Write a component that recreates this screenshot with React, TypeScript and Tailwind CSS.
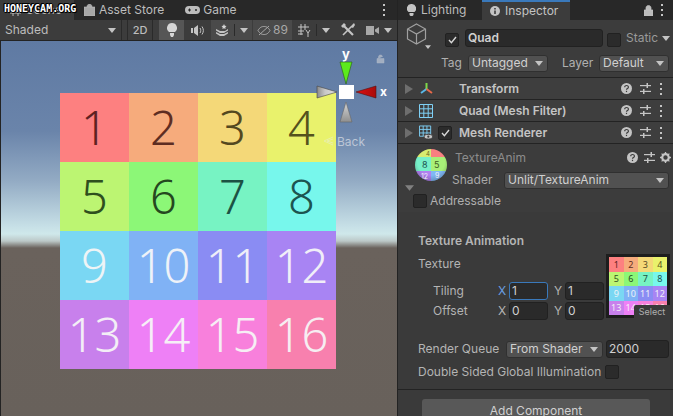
const cells = [
  { n: "1", bg: "bg-[#fd8080]", fg: "text-[#5e2222]" },
  { n: "2", bg: "bg-[#f6ab7c]", fg: "text-[#5e2d22]" },
  { n: "3", bg: "bg-[#f4d878]", fg: "text-[#54481f]" },
  { n: "4", bg: "bg-[#e9f26c]", fg: "text-[#54521d]" },
  { n: "5", bg: "bg-[#bcf572]", fg: "text-[#2f4f1e]" },
  { n: "6", bg: "bg-[#8cf777]", fg: "text-[#25481f]" },
  { n: "7", bg: "bg-[#77f3c3]", fg: "text-[#1c5244]" },
  { n: "8", bg: "bg-[#77f7ec]", fg: "text-[#1c5450]" },
  { n: "9", bg: "bg-[#7ad7f3]", fg: "text-[#eef4f6]" },
  { n: "10", bg: "bg-[#80b2f5]", fg: "text-[#eef2f8]" },
  { n: "11", bg: "bg-[#8a8cf3]", fg: "text-[#eeeef8]" },
  { n: "12", bg: "bg-[#a884f3]", fg: "text-[#f0eef8]" },
  { n: "13", bg: "bg-[#c880ec]", fg: "text-[#f3eef6]" },
  { n: "14", bg: "bg-[#ee80f6]", fg: "text-[#f6eef6]" },
  { n: "15", bg: "bg-[#f880dc]", fg: "text-[#f6eef4]" },
  { n: "16", bg: "bg-[#f880ae]", fg: "text-[#f6eef2]" },
];

const Caret = ({ className = "" }: { className?: string }) => (
  <svg width="8" height="5" viewBox="0 0 8 5" className={className}>
    <path d="M0 0h8L4 5z" fill="#c4c4c4" />
  </svg>
);

const Kebab = () => (
  <svg width="4" height="12" viewBox="0 0 4 12">
    <g fill="#c4c4c4">
      <rect x="1" y="0" width="2" height="2" />
      <rect x="1" y="5" width="2" height="2" />
      <rect x="1" y="10" width="2" height="2" />
    </g>
  </svg>
);

const Help = () => (
  <svg width="11" height="11" viewBox="0 0 11 11">
    <circle cx="5.5" cy="5.5" r="5.5" fill="#c4c4c4" />
    <path d="M3.7 4.2c0-2.3 3.7-2.3 3.7 0 0 1.4-1.9 1.3-1.9 2.6" fill="none" stroke="#3c3c3c" strokeWidth="1.2" />
    <rect x="4.9" y="7.8" width="1.2" height="1.3" fill="#3c3c3c" />
  </svg>
);

const Sliders = () => (
  <svg width="11" height="11" viewBox="0 0 11 11">
    <g fill="#c4c4c4">
      <rect x="0" y="2" width="11" height="1.2" />
      <rect x="0" y="7.8" width="11" height="1.2" />
      <rect x="6.5" y="0" width="1.5" height="5" />
      <rect x="3" y="6" width="1.5" height="5" />
    </g>
  </svg>
);

const Check = () => (
  <svg width="9" height="8" viewBox="0 0 9 8">
    <path d="M1 4l2.4 2.6L8 1" fill="none" stroke="#d8d8d8" strokeWidth="1.4" />
  </svg>
);

const Box = ({ checked = false }: { checked?: boolean }) => (
  <span className="flex h-[14px] w-[14px] shrink-0 items-center justify-center rounded-[2px] border border-[#212121] bg-[#2b2b2b]">
    {checked && <Check />}
  </span>
);

const GridIcon = () => (
  <svg width="14" height="14" viewBox="0 0 14 14">
    <path d="M.5.5h13v13H.5zM.5 4.800h13M.5 9.200h13M4.800.5v13M9.200.5v13" fill="none" stroke="#7fd0f5" strokeWidth="1" />
  </svg>
);

const ToolBtn = ({ w, active, children }: { w: string; active?: string; children: React.ReactNode }) => (
  <div className={`flex h-[20px] items-center justify-center gap-[5px] ${w} ${active ?? "bg-[#3c3c3c]"} text-[#bdbdbd]`}>
    {children}
  </div>
);

const Toolbar = () => (
  <div className="flex h-[21px] items-center border-b border-[#232323] bg-[#3c3c3c] text-[12px]">
    <div className="flex h-[20px] w-[122px] items-center justify-between border-r border-[#2a2a2a] pl-[5px] pr-[5px] text-[#bdbdbd]">
      Shaded
      <Caret />
    </div>
    <div className="ml-[5px] flex h-[20px] w-[26px] items-center justify-center border-x border-[#2a2a2a] text-[11px] font-medium text-[#bdbdbd]">
      2D
    </div>
    <div className="ml-[6px] flex items-center gap-px">
      <ToolBtn w="w-[25px]" active="bg-[#565656]">
        <svg width="10" height="14" viewBox="0 0 10 14">
          <path d="M5 0a5 5 0 0 1 3 9H2A5 5 0 0 1 5 0zM3 10h4v2l-1 2H4l-1-2z" fill="#d6d6d6" />
        </svg>
      </ToolBtn>
      <ToolBtn w="w-[25px]">
        <svg width="13" height="11" viewBox="0 0 13 11">
          <path d="M0 3h2v5H0zM3 3l4-3v11L3 8z" fill="#c4c4c4" />
          <path d="M9 3c1 1.500 1 3.500 0 5M11 1.500c1.800 2.500 1.800 5.500 0 8" fill="none" stroke="#c4c4c4" />
        </svg>
      </ToolBtn>
      <ToolBtn w="w-[41px]" active="bg-[#4a4a4a]">
        <svg width="13" height="12" viewBox="0 0 13 12">
          <path d="M0 5l4 2 5 0 3-2v1.500L8 9H4L0 6.500zM0 8l4 2h4l4-2v1.500L8 12H4L0 9.500z" fill="#c4c4c4" />
          <path d="M8 0l.8 1.700 1.700.3-1.200 1.200.3 1.800L8 4.200l-1.600.8.300-1.800L5.500 2l1.700-.3z" fill="#d6d6d6" />
        </svg>
        <span className="h-[12px] w-px bg-[#2a2a2a]" />
        <Caret />
      </ToolBtn>
      <ToolBtn w="w-[39px]" active="bg-[#4a4a4a]">
        <svg width="14" height="11" viewBox="0 0 14 11" className="-mr-[3px]">
          <path d="M1 5.500C3 2 5 1.500 7 1.500s4 .5 6 4c-2 3.500-4 4-6 4s-4-.5-6-4zM2 10l10-9" fill="none" stroke="#a8a8a8" />
        </svg>
        <span className="text-[12px] leading-none text-[#a8a8a8]">89</span>
      </ToolBtn>
      <ToolBtn w="w-[41px]">
        <svg width="13" height="13" viewBox="0 0 13 13">
          <path d="M3 0v11M7 0v6M0 3h11M0 7h6M0 10h5M8 6l2 3 2-3M10 9v4" fill="none" stroke="#c4c4c4" />
        </svg>
        <span className="h-[12px] w-px bg-[#2a2a2a]" />
        <Caret />
      </ToolBtn>
      <ToolBtn w="w-[25px]">
        <svg width="14" height="14" viewBox="0 0 14 14">
          <path d="M3 3l9 9" stroke="#c4c4c4" strokeWidth="2.200" />
          <path d="M0 3l3-3 2 2-3 3zM11 2l2-2 1 2-2 3-2-1z" fill="#c4c4c4" />
          <path d="M11 3l-9 9" stroke="#c4c4c4" strokeWidth="1.600" />
        </svg>
      </ToolBtn>
      <ToolBtn w="w-[35px]">
        <svg width="13" height="9" viewBox="0 0 13 9">
          <path d="M0 0h8v9H0zM9 3.500L13 1v7L9 5.500z" fill="#a8a8a8" />
        </svg>
        <Caret />
      </ToolBtn>
    </div>
  </div>
);

const SceneTabs = () => (
  <div className="relative flex h-[20px] items-center bg-[#282828] text-[12px] text-[#bdbdbd]">
    <div className="flex h-full w-[74px] items-center gap-[5px] bg-[#3c3c3c] pl-[10px]">
      <svg width="11" height="11" viewBox="0 0 11 11">
        <path d="M3 0v11M8 0v11M0 3h11M0 8h11" stroke="#bdbdbd" fill="none" />
      </svg>
      Scene
    </div>
    <svg width="11" height="12" viewBox="0 0 11 12" className="ml-[10px]">
      <path d="M0 3h11v9H0zM3 3c0-4 5-4 5 0" fill="#bdbdbd" stroke="#bdbdbd" strokeWidth=".6" fillOpacity=".85" />
    </svg>
    <span className="ml-[4px]">Asset Store</span>
    <svg width="15" height="8" viewBox="0 0 15 8" className="ml-[21px]">
      <rect width="15" height="8" rx="4" fill="#bdbdbd" />
      <path d="M3 4h3M4.500 2.500v3" stroke="#282828" />
      <circle cx="11" cy="4" r="1" fill="#282828" />
    </svg>
    <span className="ml-[3px]">Game</span>
    <span className="ml-auto mr-[11px]">
      <Kebab />
    </span>
    <span className="absolute left-[4px] top-[3px] font-['DejaVu_Sans_Mono',monospace] text-[10px] font-bold leading-[12px] text-white [text-shadow:-1px_0_#000,1px_0_#000,0_-1px_#000,0_1px_#000,1px_1px_#000,-1px_-1px_#000]">
      HONEYCAM.ORG
    </span>
  </div>
);

const Gizmo = () => (
  <svg width="85" height="120" viewBox="0 -10 85 120" className="absolute left-[309px] top-[-1px]">
    <defs>
      <linearGradient id="coneH" x1="0" x2="1" y1="0" y2="0">
        <stop offset="0" stopColor="#8a8a8a" />
        <stop offset=".4" stopColor="#c8c8c8" />
        <stop offset="1" stopColor="#e0e0e0" />
      </linearGradient>
      <linearGradient id="coneV" x1="0" x2="0" y1="0" y2="1">
        <stop offset="0" stopColor="#d8d8d8" />
        <stop offset="1" stopColor="#8f8f8f" />
      </linearGradient>
      <linearGradient id="coneR" x1="0" x2="1" y1="0" y2="0">
        <stop offset="0" stopColor="#e01010" />
        <stop offset="1" stopColor="#a80c0c" />
      </linearGradient>
    </defs>
    <rect x="29" y="35" width="15" height="14" fill="#fff" />
    <path d="M36 34l-6-22h12z" fill="#5ce91c" stroke="#2a5a14" strokeWidth=".6" />
    <path d="M46 42l20-6v12z" fill="url(#coneR)" stroke="#501010" strokeWidth=".6" />
    <path d="M27 42L7 36v12z" fill="url(#coneH)" stroke="#444" strokeWidth=".6" />
    <path d="M36 52l-6 20h12z" fill="url(#coneV)" stroke="#666" strokeWidth=".6" />
    <path d="M67 8.500h7V13h-7zM68.500 8.500V6.800c0-2.400 4-2.400 4 0" fill="#aab4c4" stroke="#aab4c4" strokeWidth=".5" fillOpacity=".9" />
    <text x="36" y="9" textAnchor="middle" fontSize="13" fontWeight="700" fill="#fff" fontFamily="Inter, sans-serif">y</text>
    <text x="70" y="46" fontSize="12" fontWeight="700" fill="#fff" fontFamily="Inter, sans-serif">x</text>
    <path d="M23 87l-9 4 9 4M23 89l-6 2 6 2" fill="none" stroke="#e8eeb0" strokeOpacity=".85" />
    <text x="27" y="96" fontSize="12" fill="#d5dae2" fillOpacity=".75" fontFamily="Inter, sans-serif">Back</text>
  </svg>
);

const SceneView = () => (
  <div className="relative flex-1 overflow-hidden border-l border-[#232323] bg-[linear-gradient(180deg,#5f7aa3_0px,#6a84aa_90px,#93abc4_140px,#c6dfe6_185px,#cfe8ea_193px,#bcc8c8_200px,#6a625c_207px,#68615b_100%)] pl-[59px] pt-[52px]">
    <div className="grid h-[276px] w-[276px] grid-cols-4 grid-rows-4 font-['Noto_Sans',sans-serif]">
      {cells.map((c) => (
        <div key={c.n} className={`flex items-center justify-center text-[47px] font-light leading-none ${c.bg} ${c.fg}`}>
          {c.n}
        </div>
      ))}
    </div>
    <Gizmo />
  </div>
);

const Select = ({ w, label }: { w: string; label: string }) => (
  <div className={`flex h-[17px] items-center justify-between rounded-[3px] border border-[#303030] bg-[#515151] pl-[3px] pr-[4px] text-[12px] text-[#d0d0d0] ${w}`}>
    <span>{label}</span>
    <Caret />
  </div>
);

const Field = ({ w, value, focus }: { w: string; value: string; focus?: boolean }) => (
  <div className={`flex h-[18px] items-center rounded-[3px] border bg-[#2a2a2a] pl-[2px] text-[12px] text-[#d0d0d0] ${w} ${focus ? "border-[#3a79bb]" : "border-[#212121]"}`}>
    {value}
  </div>
);

const ComponentRow = ({ icon, check, label }: { icon: React.ReactNode; check?: boolean; label: string }) => (
  <div className="flex h-[22px] items-center border-b border-[#232323] bg-[#3e3e3e] pl-[7px]">
    <svg width="8" height="10" viewBox="0 0 8 10">
      <path d="M0 0l8 5-8 5z" fill="#6e6e6e" />
    </svg>
    <span className="ml-[6px] flex w-[14px] justify-center">{icon}</span>
    <span className="ml-[5px] flex w-[16px]">{check && <Box checked />}</span>
    <span className="ml-[5px] text-[12px] font-semibold text-[#c4c4c4]">{label}</span>
    <span className="ml-auto flex w-[52px] items-center justify-between pr-[10px]">
      <Help />
      <Sliders />
      <Kebab />
    </span>
  </div>
);

const InspectorHeader = () => (
  <>
    <div className="flex h-[20px] items-center bg-[#282828] text-[12px] text-[#bdbdbd]">
      <svg width="9" height="12" viewBox="0 0 9 12" className="ml-[9px]">
        <path d="M4.500 0a4.500 4.500 0 0 1 3 8h-6a4.500 4.500 0 0 1 3-8zM2.500 9h4v2l-1 1h-2l-1-1z" fill="#c4c4c4" />
      </svg>
      <span className="ml-[5px] w-[61px]">Lighting</span>
      <div className="flex h-full w-[88px] items-center gap-[5px] border-t-2 border-[#3a79bb] bg-[#3c3c3c] pl-[8px] text-[#c4c4c4]">
        <svg width="10" height="10" viewBox="0 0 10 10">
          <circle cx="5" cy="5" r="5" fill="#c4c4c4" />
          <path d="M4.200 2h1.600v1.500H4.200zM4.200 4.500h1.600V8H4.200z" fill="#3c3c3c" />
        </svg>
        Inspector
      </div>
      <svg width="9" height="11" viewBox="0 0 9 11" className="ml-auto">
        <path d="M0 5h9v6H0zM2 5V3c0-3.500 5-3.500 5 0v2" fill="#c4c4c4" stroke="#c4c4c4" strokeWidth=".7" fillOpacity=".95" />
      </svg>
      <span className="ml-[7px] mr-[9px]">
        <Kebab />
      </span>
    </div>
    <div className="h-[58px] border-b border-[#232323] bg-[#3c3c3c]">
      <div className="flex h-[27px] items-end">
        <div className="relative ml-[8px] h-[24px] w-[39px]">
          <svg width="21" height="22" viewBox="0 0 21 22">
            <path d="M10.500 1l9 5v10l-9 5-9-5V6zM1.500 6l9 5 9-5M10.500 11v10" fill="none" stroke="#a0a0a0" strokeWidth="1.200" />
          </svg>
          <Caret className="absolute bottom-[-2px] left-[19px] h-[4px] w-[6px]" />
        </div>
        <Box checked />
        <div className="ml-[6px] flex h-[18px] w-[138px] items-center rounded-[3px] border border-[#212121] bg-[#2a2a2a] pl-[2px] text-[12px] font-semibold text-[#d0d0d0]">
          Quad
        </div>
        <span className="ml-[4px] flex">
          <Box />
        </span>
        <span className="ml-[5px] text-[12px] leading-[18px] text-[#9a9a9a]">Static</span>
        <Caret className="mb-[6px] ml-[4px]" />
      </div>
      <div className="mt-[7px] flex items-center text-[12px] text-[#b0b0b0]">
        <span className="ml-[43px] w-[27px]">Tag</span>
        <Select w="w-[80px]" label="Untagged" />
        <span className="ml-[14px] w-[37px]">Layer</span>
        <Select w="w-[70px]" label="Default" />
      </div>
    </div>
  </>
);

const Sphere = () => (
  <svg width="32" height="32" viewBox="0 0 32 32">
    <defs>
      <clipPath id="sphere">
        <circle cx="16" cy="16" r="16" />
      </clipPath>
      <radialGradient id="shade" cx=".5" cy=".4" r=".6">
        <stop offset=".7" stopColor="#000" stopOpacity="0" />
        <stop offset="1" stopColor="#000" stopOpacity=".2" />
      </radialGradient>
    </defs>
    <g clipPath="url(#sphere)">
      <rect width="16" height="8" fill="#d8ec70" />
      <rect x="16" width="16" height="8" fill="#f88080" />
      <rect y="8" width="16" height="14" fill="#77f0c8" />
      <rect x="16" y="8" width="16" height="14" fill="#a8f078" />
      <rect y="22" width="16" height="10" fill="#b080f0" />
      <rect x="16" y="22" width="16" height="10" fill="#80b8f5" />
      <rect width="32" height="32" fill="url(#shade)" />
      <text x="7" y="19" fontSize="9" fill="#1c5450" fontFamily="Inter, sans-serif">8</text>
      <text x="19" y="19" fontSize="9" fill="#3f5a1e" fontFamily="Inter, sans-serif">5</text>
      <text x="6" y="30" fontSize="7" fill="#f0f0f8" fontFamily="Inter, sans-serif">12</text>
      <text x="20" y="29" fontSize="7" fill="#f0f0f8" fontFamily="Inter, sans-serif">9</text>
      <text x="11" y="7" fontSize="6" fill="#6b6b20" fontFamily="Inter, sans-serif">4</text>
    </g>
  </svg>
);

const Material = () => (
  <div className="relative h-[68px] bg-[#3c3c3c] pl-[17px] pt-[5px]">
    <div className="flex">
      <Sphere />
      <div className="ml-[5px] flex-1">
        <div className="flex h-[17px] items-center">
          <span className="ml-[3px] text-[12px] text-[#8c8c8c]">TextureAnim</span>
          <span className="ml-auto mr-[2px] flex w-[44px] items-center justify-between">
            <Help />
            <Sliders />
            <svg width="11" height="11" viewBox="0 0 11 11">
              <circle cx="5.500" cy="5.500" r="3.300" fill="none" stroke="#c4c4c4" strokeWidth="2.200" />
              <path d="M5.500 0v2.500M5.500 8.500V11M0 5.500h2.500M8.500 5.500H11M1.600 1.600l1.800 1.800M7.600 7.600l1.800 1.800M9.400 1.600L7.600 3.400M3.400 7.600L1.600 9.400" stroke="#c4c4c4" strokeWidth="1.300" />
            </svg>
          </span>
        </div>
        <div className="mt-[5px] flex items-center pr-[4px]">
          <span className="w-[52px] text-[12px] text-[#a8a8a8]">Shader</span>
          <Select w="w-[165px]" label="Unlit/TextureAnim" />
        </div>
      </div>
    </div>
    <Caret className="absolute left-[7px] top-[41px] h-[6px] w-[9px] opacity-50" />
    <div className="absolute left-[15px] top-[48px] flex items-center gap-[3px] text-[12px] text-[#b0b0b0]">
      <Box />
      Addressable
    </div>
  </div>
);

const TexturePreview = () => (
  <div className="relative ml-auto mr-[3px] h-[64px] w-[64px] overflow-hidden bg-[#1d1d1d] p-[3px]">
    <div className="grid h-[58px] w-[58px] grid-cols-4 grid-rows-4 font-['Noto_Sans',sans-serif]">
      {cells.map((c) => (
        <div key={c.n} className={`flex items-center justify-center text-[9px] leading-none ${c.bg} ${c.fg}`}>
          {c.n}
        </div>
      ))}
    </div>
    <div className="absolute bottom-0 right-0 flex h-[13px] w-[36px] items-center justify-center rounded-tl-[2px] bg-[#3a3a3a] text-[9px] text-[#b0b0b0]">
      Select
    </div>
  </div>
);

const TextureAnimation = () => (
  <div className="flex-1 overflow-hidden bg-[#3a3a3a] pt-[20px] text-[12px] text-[#b4b4b4]">
    <div className="flex h-[18px] items-center pl-[20px] text-[12px] font-semibold">Texture Animation</div>
    <div className="mt-[4px] flex">
      <div className="w-[208px] pl-[20px]">
        <div className="flex h-[20px] items-center">Texture</div>
        <div className="mt-[8px] flex h-[18px] items-center">
          <span className="ml-[15px] w-[65px]">Tiling</span>
          <span className="w-[11px] text-[#6a9ee0]">X</span>
          <Field w="w-[39px]" value="1" focus />
          <span className="ml-[6px] w-[11px]">Y</span>
          <Field w="w-[39px]" value="1" />
        </div>
        <div className="mt-[2px] flex h-[18px] items-center">
          <span className="ml-[15px] w-[65px]">Offset</span>
          <span className="w-[11px]">X</span>
          <Field w="w-[39px]" value="0" />
          <span className="ml-[6px] w-[11px]">Y</span>
          <Field w="w-[39px]" value="0" />
        </div>
      </div>
      <TexturePreview />
    </div>
    <div className="mt-[20px] flex h-[18px] items-center pl-[20px]">
      <span className="w-[88px]">Render Queue</span>
      <Select w="w-[97px]" label="From Shader" />
      <span className="ml-[3px]">
        <Field w="w-[63px]" value="2000" />
      </span>
    </div>
    <div className="mt-[5px] flex h-[18px] items-center pl-[20px]">
      <span className="w-[187px]">Double Sided Global Illumination</span>
      <Box />
    </div>
    <div className="mt-[8px] border-t border-[#232323] pt-[9px]">
      <div className="ml-[24px] flex h-[24px] w-[228px] items-start justify-center rounded-[3px] bg-[#585858] pt-[3px] text-[#d0d0d0]">
        Add Component
      </div>
    </div>
  </div>
);

export default function App() {
  return (
    <div className="flex h-[416px] w-[673px] overflow-hidden bg-[#232323] font-['Inter',sans-serif]">
      <div className="flex w-[397px] flex-col">
        <SceneTabs />
        <Toolbar />
        <SceneView />
      </div>
      <div className="ml-px flex w-[275px] flex-col">
        <InspectorHeader />
        <ComponentRow
          label="Transform"
          icon={
            <svg width="13" height="12" viewBox="0 0 13 12">
              <path d="M6.500 6V0" stroke="#7fd84a" strokeWidth="2" />
              <path d="M6.500 6L1 10" stroke="#5ab8e8" strokeWidth="2" />
              <path d="M6.500 6l5.500 4" stroke="#e8694a" strokeWidth="2" />
            </svg>
          }
        />
        <ComponentRow label="Quad (Mesh Filter)" icon={<GridIcon />} />
        <ComponentRow
          label="Mesh Renderer"
          check
          icon={
            <svg width="15" height="15" viewBox="0 0 15 15">
              <path d="M.5.500h12v11H.5zM.5 4.200h12M.5 8h12M4.500.5v11M8.500.5v11" fill="none" stroke="#7fd0f5" />
              <ellipse cx="10" cy="12" rx="4.500" ry="2.500" fill="#c4c4c4" stroke="#3e3e3e" />
              <circle cx="10" cy="12" r="1.200" fill="#3e3e3e" />
            </svg>
          }
        />
        <Material />
        <TextureAnimation />
      </div>
    </div>
  );
}
